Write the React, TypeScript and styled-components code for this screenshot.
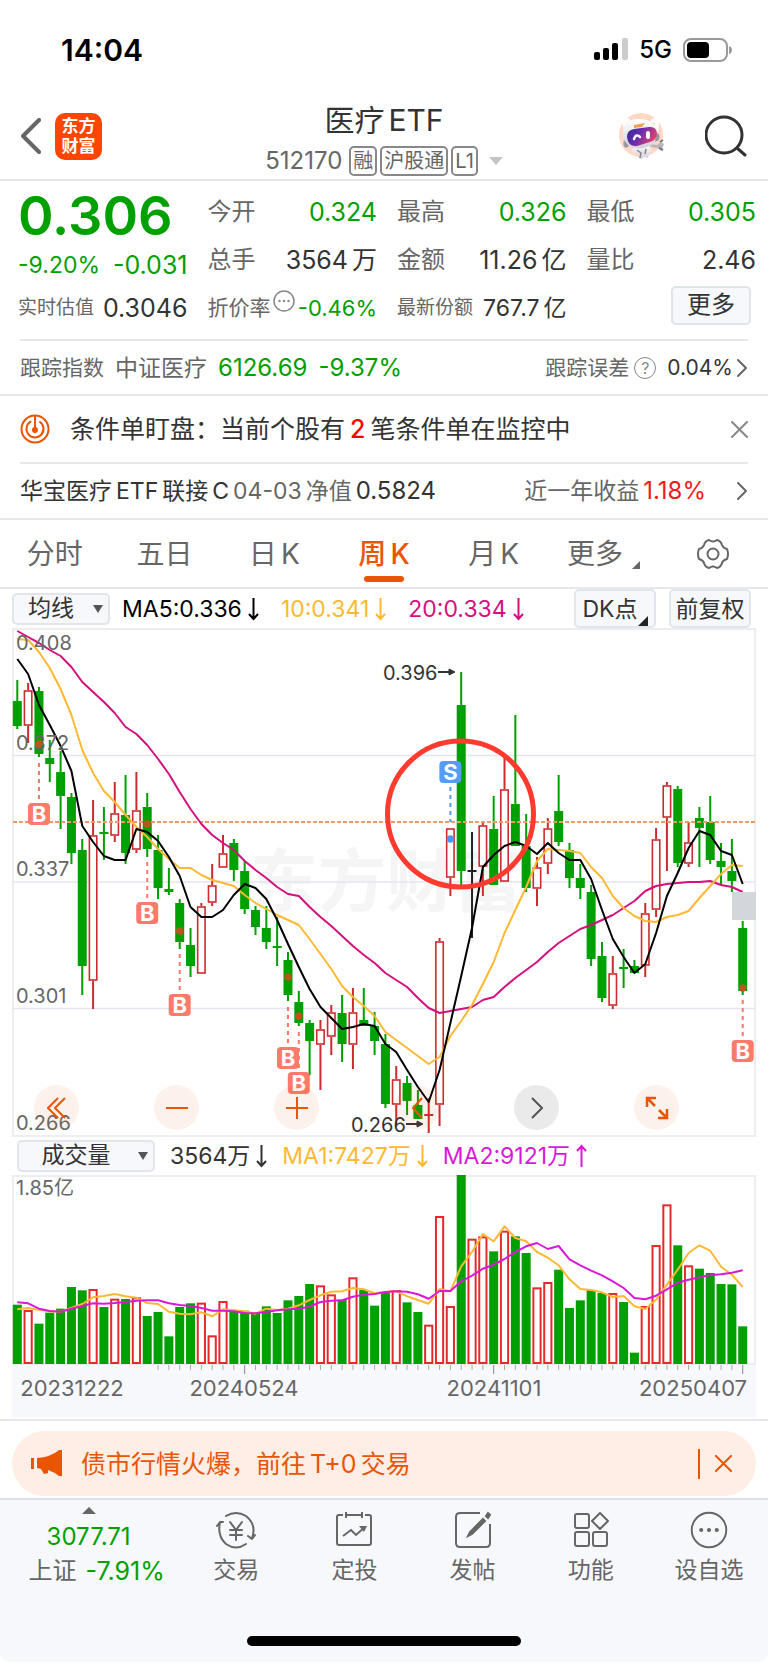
import React, { useState } from "react";
import styled, { createGlobalStyle, css } from "styled-components";

const GREEN = "#00a000";
const ORANGE = "#ea5504";
const GREY = "#666";
const INK = "#333";
const LINE = "#e6e8ec";
const PANEL = "#f7f8fb";
const YELLOW = "#fdb933";
const MAGENTA = "#d4107f";
const VIOLET = "#d81ad8";

const Global = createGlobalStyle`
  * { box-sizing: border-box; }
  body {
    margin: 0;
    background: #fff;
    color: ${INK};
    font-family: Inter, "Noto Sans CJK SC", sans-serif;
    font-size: 24px;
    line-height: 32px;
  }
  button, select {
    margin: 0;
    padding: 0;
    border: 0;
    background: none;
    color: inherit;
    font: inherit;
    cursor: pointer;
  }
  a { color: inherit; text-decoration: none; }
  svg { display: block; flex: none; }
`;

const Page = styled.div`
  display: flex;
  flex-direction: column;
  white-space: nowrap;
`;

/* ---------- status bar and header ---------- */

const StatusBar = styled.div`
  display: flex;
  align-items: center;
  justify-content: space-between;
  height: 99px;
  padding: 0 36px 0 61px;
  color: #000;
`;

const Clock = styled.time`
  font-size: 30px;
  font-weight: 600;
`;

const StatusIcons = styled.div`
  display: flex;
  align-items: center;
  gap: 11px;
  font-weight: 500;
`;

const Header = styled.header`
  display: grid;
  grid-template-columns: 1fr auto 1fr;
  align-items: center;
  height: 82px;
  padding: 0 21px;
  border-bottom: 2px solid ${LINE};
`;

const HeaderSide = styled.div<{ $end?: boolean }>`
  display: flex;
  align-items: center;
  gap: ${(p) => (p.$end ? 40 : 14)}px;
  justify-content: ${(p) => (p.$end ? "flex-end" : "flex-start")};
  padding-bottom: 6px;
`;

const Logo = styled.a`
  display: grid;
  place-content: center;
  width: 47px;
  height: 47px;
  border-radius: 10px;
  background: #ff4500;
  color: #fff;
  font-size: 17px;
  font-weight: 700;
  line-height: 20px;
`;

const Titles = styled.div`
  display: flex;
  flex-direction: column;
  align-items: center;
  gap: 6px;
`;

const Title = styled.h1`
  display: flex;
  gap: 4px;
  margin: 0;
  font-size: 30px;
  font-weight: 400;
  line-height: 38px;
`;

const SubTitle = styled.div`
  display: flex;
  align-items: center;
  gap: 3px;
  height: 32px;
  color: ${GREY};
`;

const Code = styled.span`
  margin-right: 4px;
`;

const Tag = styled.span`
  height: 30px;
  padding: 0 2px;
  border: 2px solid #888;
  border-radius: 5px;
  font-size: 20px;
  line-height: 26px;
`;

const SubToggle = styled.button`
  margin-left: 8px;
`;

/* ---------- quotes ---------- */

const Quotes = styled.section`
  display: grid;
  grid-template-columns: repeat(4, minmax(0, 1fr));
  grid-template-rows: repeat(3, 48px);
  column-gap: 20px;
  padding: 7px 12px 7px 18px;
`;

const Headline = styled.div`
  grid-row: span 2;
  color: ${GREEN};
`;

const Price = styled.div`
  font-size: 54px;
  font-weight: 600;
  line-height: 56px;
`;

const Change = styled.div`
  display: flex;
  justify-content: space-between;
  font-size: 25px;
  line-height: 42px;
`;

const Percent = styled.span`
  font-size: 23px;
`;

const Cell = styled.div`
  display: flex;
  align-items: center;
  justify-content: space-between;
`;

const Label = styled.span<{ $size?: number }>`
  display: flex;
  color: ${GREY};
  font-size: ${(p) => p.$size ?? 24}px;
`;

const Value = styled.span<{ $down?: boolean; $size?: number }>`
  display: flex;
  gap: 4px;
  color: ${(p) => (p.$down ? GREEN : INK)};
  font-size: ${(p) => p.$size ?? 25}px;
`;

const MoreButton = styled.button`
  width: 80px;
  height: 39px;
  margin: 0 5px 6px auto;
  border: 2px solid #dfe3ea;
  border-radius: 5px;
  background: ${PANEL};
`;

/* ---------- information rows ---------- */

const Row = styled.section<{ $height: number; $full?: boolean }>`
  display: flex;
  align-items: center;
  justify-content: space-between;
  height: ${(p) => p.$height}px;
  margin: 0 ${(p) => (p.$full ? 0 : 20)}px;
  padding: 0 ${(p) => (p.$full ? 20 : 0)}px;
  border-bottom: 2px solid ${LINE};
`;

const RowTop = styled.hr`
  width: calc(100% - 40px);
  height: 2px;
  margin: 0 20px;
  border: 0;
  background: ${LINE};
`;

const Group = styled.div<{ $gap?: number; $size?: number }>`
  display: flex;
  align-items: center;
  gap: ${(p) => p.$gap ?? 4}px;
  font-size: ${(p) => p.$size ?? 24}px;
`;

const Tone = styled.span<{ $c: string; $strong?: boolean; $size?: number }>`
  color: ${(p) => p.$c};
  font-size: ${(p) => (p.$size ? `${p.$size}px` : "inherit")};
  font-weight: ${(p) => (p.$strong ? 500 : 400)};
`;

/* ---------- period tabs ---------- */

const Tabs = styled.nav`
  display: grid;
  grid-template-columns: repeat(7, 1fr);
  height: 69px;
  border-bottom: 2px solid ${LINE};
`;

const Tab = styled.button<{ $on?: boolean }>`
  position: relative;
  display: flex;
  align-items: center;
  justify-content: center;
  gap: 4px;
  color: ${(p) => (p.$on ? ORANGE : GREY)};
  font-size: 28px;
  font-weight: ${(p) => (p.$on ? 500 : 400)};
  ${(p) =>
    p.$on &&
    css`
      &::after {
        content: "";
        position: absolute;
        bottom: 5px;
        left: calc(50% - 20px);
        width: 40px;
        height: 6px;
        border-radius: 3px;
        background: ${ORANGE};
      }
    `}
`;

const Corner = styled.i<{ $c: string }>`
  align-self: flex-end;
  border: 5px solid transparent;
  border-right-color: ${(p) => p.$c};
  border-bottom-color: ${(p) => p.$c};
`;

const TabCorner = styled(Corner)`
  margin: 0 0 18px 5px;
  border-width: 4px;
`;

/* ---------- indicator bars ---------- */

const IndicatorBar = styled.div<{ $inset: number; $height: number }>`
  display: flex;
  align-items: center;
  height: ${(p) => p.$height}px;
  padding: 0 17px 0 ${(p) => p.$inset}px;
`;

const Picker = styled.label<{ $width: number }>`
  position: relative;
  width: ${(p) => p.$width}px;
  height: 32px;
  border: 2px solid #e2e5eb;
  border-radius: 5px;
  background: ${PANEL};
  font-size: 23px;
  &::after {
    content: "";
    position: absolute;
    top: 10px;
    right: 5px;
    border: 5px solid transparent;
    border-top: 8px solid #555;
    border-bottom: 0;
    pointer-events: none;
  }
`;

const PickerSelect = styled.select`
  display: block;
  appearance: none;
  width: 100%;
  height: 26px;
  padding-right: 20px;
  line-height: 26px;
  text-align: center;
  text-align-last: center;
`;

const Readings = styled.div<{ $gap: number; $left: number }>`
  display: flex;
  flex: 1;
  gap: ${(p) => p.$gap}px;
  margin-left: ${(p) => p.$left}px;
  font-size: 23px;
`;

const Reading = styled.span<{ $c: string }>`
  display: flex;
  align-items: center;
  gap: 5px;
  color: ${(p) => p.$c};
`;

const ToolButton = styled.button`
  display: flex;
  align-items: center;
  justify-content: center;
  width: 82px;
  height: 39px;
  margin-left: 13px;
  border: 2px solid #e2e5eb;
  border-radius: 5px;
  background: ${PANEL};
  font-size: 23px;
`;

/* ---------- charts ---------- */

const ChartBox = styled.div`
  position: relative;
  margin: 0 12px;
`;

const Plot = styled.svg`
  width: 100%;
  height: auto;
  font-family: Inter, "Noto Sans CJK SC", sans-serif;
`;

const ChartTools = styled.div`
  position: absolute;
  right: 77px;
  bottom: 7px;
  left: 22px;
  display: flex;
  justify-content: space-between;
`;

const RoundButton = styled.button<{ $grey?: boolean }>`
  display: grid;
  place-items: center;
  width: 45px;
  height: 45px;
  border-radius: 50%;
  background: ${(p) => (p.$grey ? "rgba(80,80,80,.12)" : "rgba(234,85,4,.08)")};
  color: ${(p) => (p.$grey ? "#555" : ORANGE)};
`;

/* ---------- bottom ---------- */

const BannerArea = styled.div`
  margin-top: 1px;
  padding: 10px 12px 2px;
  border-top: 2px solid ${LINE};
`;

const Banner = styled.div`
  display: flex;
  align-items: center;
  height: 65px;
  padding: 0 24px 0 19px;
  border-radius: 33px;
  background: #feeee6;
  color: ${ORANGE};
  font-size: 25px;
`;

const BannerLink = styled.a`
  display: flex;
  flex: 1;
  gap: 4px;
  margin-left: 18px;
`;

const BannerClose = styled.button`
  display: flex;
  align-items: center;
  height: 30px;
  padding-left: 15px;
  border-left: 2px solid ${ORANGE};
`;

const BottomBar = styled.footer`
  display: flex;
  flex-direction: column;
  align-items: center;
  justify-content: space-between;
  height: 164px;
  padding-bottom: 16px;
  border-top: 2px solid #dcdfe6;
  border-radius: 0 0 10px 10px;
  background: ${PANEL};
`;

const BottomNav = styled.nav`
  display: grid;
  grid-template-columns: 3fr repeat(5, 2fr);
  width: 100%;
`;

const NavItem = styled.button`
  display: flex;
  flex-direction: column;
  align-items: center;
  gap: 5px;
  padding-top: 11px;
  color: ${GREY};
  font-size: 23px;
`;

const IndexButton = styled.button`
  display: flex;
  flex-direction: column;
  align-items: center;
  padding-top: 7px;
  color: ${GREEN};
  line-height: 34px;
`;

const IndexFigures = styled.span`
  display: flex;
  flex-direction: column;
  align-items: center;
  width: 100%;
  padding-top: 5px;
`;

const IndexChange = styled(Group)`
  padding-left: 16px;
`;

const HomeIndicator = styled.div`
  width: 274px;
  height: 10px;
  border-radius: 5px;
  background: #000;
`;

/* ---------- data ---------- */

// kind, high, body top, body bottom, low
type Candle = [string, number, number, number, number];

const candles: Candle[] = [
  ["g", 680, 701, 726, 729], ["r", 683, 690, 726, 743], ["g", 687, 691, 754, 757], ["g", 740, 758, 764, 782],
  ["g", 751, 772, 796, 829], ["g", 793, 797, 853, 864], ["g", 839, 850, 966, 995], ["r", 800, 835, 981, 1009],
  ["g", 807, 832, 834, 860], ["r", 782, 813, 836, 842], ["g", 775, 815, 853, 864], ["r", 772, 810, 850, 853],
  ["g", 793, 807, 849, 857], ["g", 835, 850, 888, 899], ["g", 868, 889, 892, 895], ["g", 899, 903, 942, 949],
  ["g", 928, 945, 966, 977], ["r", 903, 906, 974, 974], ["r", 864, 885, 903, 906], ["r", 835, 853, 868, 868],
  ["g", 839, 843, 870, 881], ["g", 861, 871, 909, 914], ["g", 906, 910, 927, 935], ["g", 906, 928, 942, 949],
  ["g", 917, 946, 948, 966], ["g", 952, 960, 995, 1001], ["g", 991, 1002, 1023, 1026], ["g", 1020, 1023, 1041, 1075],
  ["r", 1020, 1029, 1045, 1090], ["r", 1005, 1012, 1037, 1055], ["g", 995, 1013, 1044, 1062], ["r", 988, 1012, 1045, 1069],
  ["g", 988, 1020, 1026, 1026], ["g", 1012, 1026, 1041, 1055], ["g", 1034, 1044, 1104, 1108], ["r", 1066, 1079, 1105, 1126],
  ["g", 1076, 1083, 1101, 1115], ["g", 1090, 1105, 1119, 1119], ["r", 1098, 1114, 1116, 1133], ["r", 938, 941, 1105, 1126],
  ["r", 828, 828, 878, 896], ["g", 672, 705, 871, 885], ["k", 832, 870, 872, 938], ["r", 822, 825, 867, 896],
  ["g", 796, 829, 885, 885], ["r", 755, 789, 882, 882], ["g", 715, 804, 846, 846], ["g", 814, 846, 888, 892],
  ["r", 857, 867, 889, 906], ["r", 818, 828, 864, 874], ["g", 775, 811, 842, 846], ["g", 843, 850, 878, 888],
  ["g", 864, 878, 888, 899], ["g", 885, 892, 959, 966], ["g", 942, 956, 998, 1002], ["r", 956, 973, 1006, 1009],
  ["g", 949, 967, 969, 988], ["g", 960, 966, 973, 973], ["r", 903, 913, 966, 977], ["r", 828, 839, 910, 917],
  ["r", 782, 785, 818, 871], ["g", 786, 789, 863, 867], ["r", 822, 842, 864, 867], ["g", 807, 818, 828, 867],
  ["g", 796, 822, 860, 864], ["g", 843, 861, 867, 885], ["g", 839, 871, 881, 892], ["g", 921, 928, 991, 995],
];

const ma5 = [
  659, 674, 705, 725, 746, 771, 826, 842, 856, 860, 860, 829, 832, 841, 857, 876, 907, 917, 917, 910, 895, 884, 888, 899,
  920, 944, 967, 989, 1007, 1018, 1029, 1027, 1024, 1026, 1044, 1052, 1070, 1087, 1102, 1070, 1023, 976, 928, 867, 855,
  846, 842, 846, 854, 843, 853, 860, 860, 879, 910, 939, 957, 973, 964, 933, 896, 873, 848, 831, 835, 851, 855, 884,
];

const ma10 = [
  639, 640, 652, 668, 689, 715, 750, 773, 791, 802, 815, 827, 837, 849, 859, 868, 868, 875, 880, 883, 886, 895, 903, 909,
  915, 920, 925, 939, 954, 969, 986, 997, 1006, 1016, 1032, 1040, 1048, 1056, 1064, 1057, 1036, 1021, 1005, 984, 962, 933,
  910, 887, 861, 849, 850, 851, 853, 867, 878, 896, 908, 916, 921, 922, 917, 915, 911, 898, 886, 874, 865, 866,
];

const ma20 = [
  631, 637, 643, 650, 656, 667, 682, 692, 702, 713, 727, 734, 745, 759, 774, 792, 809, 824, 835, 843, 850, 861, 870, 878,
  887, 894, 896, 907, 917, 926, 936, 946, 955, 963, 973, 980, 987, 998, 1008, 1013, 1011, 1009, 1007, 1000, 997, 987, 978,
  970, 962, 952, 943, 936, 929, 925, 920, 915, 908, 901, 891, 886, 884, 883, 882, 882, 881, 885, 887, 892,
];

// Bar heights, three units to a pixel.
const volumes = [
  178, 162, 121, 154, 166, 231, 221, 225, 171, 196, 195, 200, 144, 156, 83, 171, 182, 184, 86, 189, 157, 160, 153, 173,
  153, 191, 204, 240, 236, 209, 193, 260, 222, 175, 216, 222, 185, 156, 118, 444, 174, 568, 376, 383, 338, 400, 383, 333,
  230, 246, 283, 168, 191, 222, 213, 213, 186, 34, 174, 357, 479, 356, 296, 286, 273, 240, 239, 113,
];

const volMa1 = [
  164, 168, 163, 158, 157, 168, 180, 200, 204, 210, 203, 199, 183, 180, 157, 151, 149, 155, 143, 164, 161, 158, 151, 166,
  162, 166, 176, 192, 206, 217, 218, 228, 224, 212, 216, 219, 203, 192, 181, 225, 218, 293, 336, 390, 368, 413, 378, 368,
  336, 319, 296, 254, 225, 222, 215, 201, 204, 173, 165, 193, 238, 283, 333, 356, 340, 292, 268, 231,
];

const volMa2 = [
  185, 182, 166, 159, 157, 166, 174, 182, 181, 183, 186, 190, 191, 191, 182, 177, 174, 168, 160, 160, 158, 153, 152, 156,
  161, 164, 166, 172, 186, 190, 191, 202, 208, 210, 216, 218, 217, 209, 196, 219, 219, 248, 265, 286, 298, 315, 336, 353,
  363, 345, 354, 314, 296, 280, 266, 248, 228, 198, 194, 205, 224, 244, 253, 260, 266, 269, 274, 281,
];

const levels: [string, number][] = [
  ["0.408", 650], ["0.372", 750], ["0.337", 876], ["0.301", 1003], ["0.266", 1130],
];

// candle index, dot height, badge height
const buys: [number, number, number][] = [
  [2, 744, 814], [12, 824, 913], [15, 931, 1005], [25, 977, 1058], [26, 1016, 1083], [67, 988, 1051],
];

const dates: [string, number][] = [
  ["20231222", 72], ["20240524", 244], ["20241101", 494], ["20250407", 693],
];

const cx = (i: number) => 17.3 + i * 10.827;
const trace = (ys: number[], f: (v: number) => number = (v) => v) =>
  ys.map((v, i) => `${cx(i).toFixed(1)},${f(v).toFixed(1)}`).join(" ");

/* ---------- small drawings ---------- */

const Chevron = ({ w, h, c = GREY, s = 2, left }: { w: number; h: number; c?: string; s?: number; left?: boolean }) => (
  <svg width={w} height={h} fill="none" stroke={c} strokeWidth={s} strokeLinejoin="round" strokeLinecap="round">
    <path d={left ? `M${w - 2} 2L2 ${h / 2}L${w - 2} ${h - 2}` : `M2 2L${w - 2} ${h / 2}L2 ${h - 2}`} />
  </svg>
);

const Cross = ({ c }: { c: string }) => (
  <svg width="17" height="17" stroke={c} strokeWidth="2" strokeLinecap="round">
    <path d="M1 1L16 16M16 1L1 16" />
  </svg>
);

const Arrow = ({ up }: { up?: boolean }) => (
  <svg width="13" height="24" fill="none" stroke="currentColor" strokeWidth="2">
    <path d={up ? "M6.500 23V2M2 7L6.500 2L11 7" : "M6.500 1V22M2 17L6.500 22L11 17"} />
  </svg>
);

const Signal = () => (
  <svg width="34" height="23">
    <rect x="0" y="14" width="6" height="8" rx="2" />
    <rect x="9" y="10" width="6" height="12" rx="2" />
    <rect x="18" y="5" width="6" height="17" rx="2" />
    <rect x="28" y="0" width="6" height="22" rx="2" fill="#ccc" />
  </svg>
);

const Battery = () => (
  <svg width="49" height="24">
    <rect x="1" y="1" width="43" height="22" rx="7" fill="none" stroke="#999" strokeWidth="2" />
    <rect x="4" y="4" width="22" height="16" rx="4" />
    <path d="M46 8q3 1 3 4t-3 4z" fill="#999" />
  </svg>
);

const Robot = () => (
  <svg width="46" height="46" viewBox="0 0 46 46">
    <defs>
      <linearGradient id="visor" x1="0" x2="1" y1="0" y2=".4">
        <stop offset="0" stopColor="#2c2f92" />
        <stop offset=".5" stopColor="#6a2bb0" />
        <stop offset="1" stopColor="#e0436c" />
      </linearGradient>
      <linearGradient id="shell" x1="0" x2="0" y1="0" y2="1">
        <stop offset="0" stopColor="#fff" />
        <stop offset="1" stopColor="#d5d1d9" />
      </linearGradient>
    </defs>
    <circle cx="22" cy="22" r="22" fill="#ffd9c6" />
    <path d="M14 32l15-2 3 6-3 9-4-1-2 2-3-1-1-4-6-2z" fill="url(#shell)" />
    <path d="M18 37l4 3-1 5M27 36l-1 5" stroke="#8a8690" strokeWidth="1.500" fill="none" />
    <path d="M32 31l6 1 4-3 3 2-2 5-5-1-7-1z" fill="#b9b5bd" />
    <path d="M41 29l3-2M40 35l4 2" stroke="#777" strokeWidth="2" />
    <path d="M6 14Q4 4 10 8M33 9q4-5 5 2l-1 9" stroke="#fff" strokeWidth="4" fill="none" />
    <path d="M4 25Q2 7 18 6q18-1 21 14 1 12-15 15Q6 37 4 25z" fill="url(#shell)" />
    <path d="M5 27q-2 6 2 8l3-2zM37 20q5 0 3 7l-4 2z" fill="#9b98a4" />
    <path d="M15 12l11-2-3 4-8 1z" fill="#f3a14c" />
    <path d="M8 24q0-7 7-8l15-2q7-1 8 6 0 7-7 9l-13 4Q9 34 8 24z" fill="url(#visor)" />
    <path d="M15 26q2-6 6-2" stroke="#fff" strokeWidth="2.500" fill="none" strokeLinecap="round" />
    <rect x="27" y="18" width="4" height="8" rx="2" fill="#fff" />
  </svg>
);

const Search = () => (
  <svg width="42" height="42" fill="none" stroke={INK} strokeWidth="3" strokeLinecap="round">
    <circle cx="19" cy="20" r="18" />
    <path d="M32 33l8 7" />
  </svg>
);

const Radar = () => (
  <svg width="30" height="30" fill="none" stroke={ORANGE} strokeWidth="2" strokeLinecap="round">
    <circle cx="15" cy="15" r="13.500" />
    <path d="M10.500 7.700A8.500 8.500 0 1 0 20 8M15 2V15M22 19q1-1 1-3" />
    <circle cx="15" cy="16" r="2" fill={ORANGE} />
  </svg>
);

const Dots = ({ size, c, s = 1.5 }: { size: number; c: string; s?: number }) => (
  <svg width={size} height={size} viewBox="0 0 22 22">
    <circle cx="11" cy="11" r="10" fill="none" stroke={c} strokeWidth={s} />
    {[6.5, 11, 15.5].map((x) => (
      <circle key={x} cx={x} cy="11" r="1.200" fill={c} />
    ))}
  </svg>
);

const Help = styled.button`
  width: 22px;
  height: 22px;
  margin: 0 8px 0 2px;
  border: 1px solid #888;
  border-radius: 50%;
  color: #888;
  font-size: 16px;
  line-height: 20px;
`;

const NoteButton = styled.button`
  position: relative;
  top: -7px;
  margin-left: 2px;
`;

const Gear = () => (
  <svg width="32" height="32" viewBox="0 0 32 32" fill="none" stroke={GREY} strokeWidth="2" strokeLinejoin="round">
    <path d="M12 2Q16 5 20 2Q24 3 25 7Q26 10 30 11Q32 16 30 21Q26 22 25 25Q24 29 20 30Q16 27 12 30Q8 29 7 25Q6 22 2 21Q0 16 2 11Q6 10 7 7Q8 3 12 2Z" />
    <circle cx="16" cy="16" r="5.500" />
  </svg>
);

const Megaphone = () => (
  <svg width="32" height="27" fill={ORANGE}>
    <path d="M0 8h3v11H0zM6 8Q20 7 28 0h3v26h-3q-5-4-11-6v3l-4 1-3-5-4-1z" />
  </svg>
);

const navIcon = { width: 40, height: 38, fill: "none", stroke: GREY, strokeWidth: 2 } as const;

const TradeIcon = () => (
  <svg {...navIcon} viewBox="0 0 40 38" strokeLinecap="round" strokeLinejoin="round">
    <path d="M10 5Q20-1 30 5Q41 14 36 27M39 24l-3 4-4-3M30 33Q20 40 10 33Q1 25 4 11M1 15l3-4 3 0" />
    <path d="M14 11l6 8 6-8M14 19h12M14 24h12M20 19v10" />
  </svg>
);

const PlanIcon = () => (
  <svg {...navIcon} viewBox="0 0 40 38">
    <path d="M9 4H5Q3 4 3 6V32Q3 34 5 34H35Q37 34 37 32V6Q37 4 35 4H31M12 1V7M28 1V7M12 4H28" />
    <path d="M9 25l8-6 5 5 9-8" />
    <path d="M25 15h8l-3 6z" fill={GREY} stroke="none" />
  </svg>
);

const PostIcon = () => (
  <svg {...navIcon} viewBox="0 0 40 38">
    <path d="M27 2H7Q3 2 3 6V32Q3 36 7 36H33Q37 36 37 32V13" />
    <path d="M30 8l2 2L19 23l-4 2 2-4z" fill={GREY} />
    <path d="M33 5l2-3 2 2-2 3z" fill={GREY} />
  </svg>
);

const AppsIcon = () => (
  <svg {...navIcon} viewBox="0 0 40 38">
    <rect x="4" y="3" width="14" height="14" rx="2" />
    <rect x="4" y="21" width="14" height="14" rx="2" />
    <rect x="22" y="21" width="14" height="14" rx="2" />
    <path d="M29 2l8 8-8 8-8-8z" strokeLinejoin="round" />
  </svg>
);

const Triangle = ({ up, w, c }: { up?: boolean; w: number; c: string }) => (
  <svg width={w} height="8" fill={c}>
    <path d={up ? `M0 7H${w}L${w / 2} 0z` : `M0 0H${w}L${w / 2} 8z`} />
  </svg>
);

/* ---------- charts ---------- */

const tint: Record<string, string> = { g: GREEN, r: "#cc2b30", k: "#222" };

const Badge = ({ x, y, text, c }: { x: number; y: number; text: string; c: string }) => (
  <g>
    <rect x={x - 11} y={y - 11} width="22" height="22" rx="4" fill={c} />
    <text x={x} y={y + 8} fontSize="22" fontWeight="700" fill="#fff" textAnchor="middle">
      {text}
    </text>
  </g>
);

const PriceChart = () => (
  <Plot viewBox="12 628 744 509" role="img" aria-label="周K">
    <rect x="13" y="629" width="742" height="507" fill="#fff" stroke={LINE} strokeWidth="1.500" />
    <text x="386" y="906" fontSize="68" fontWeight="700" fill="#f5f5f5" textAnchor="middle">
      东方财富
    </text>
    {[755.5, 882, 1008.5].map((y) => (
      <line key={y} x1="13" x2="755" y1={y} y2={y} stroke="#e4e5ee" strokeWidth="1.500" />
    ))}
    {candles.map(([k, hi, top, bottom, lo], i) => {
      const hollow = k === "r" && bottom - top > 3;
      return (
        <g key={i} stroke={tint[k]} strokeWidth="2">
          <path d={`M${cx(i)} ${hi}V${top}M${cx(i)} ${bottom}V${lo}`} />
          {hollow ? (
            <rect x={cx(i) - 3.7} y={top + 1} width="7.400" height={bottom - top - 2} fill="#fff" strokeWidth="1.600" />
          ) : (
            <rect x={cx(i) - 4.5} y={top} width="9" height={bottom - top} fill={tint[k]} stroke="none" />
          )}
        </g>
      );
    })}
    <line x1="13" x2="755" y1="822" y2="822" stroke="#ee9a68" strokeWidth="2" strokeDasharray="4 2" />
    <g fill="none" strokeWidth="2" strokeLinejoin="round">
      <polyline points={trace(ma20)} stroke={MAGENTA} />
      <polyline points={trace(ma10)} stroke={YELLOW} />
      <polyline points={trace(ma5)} stroke="#000" />
    </g>
    <g fontSize="20" fill={GREY}>
      {levels.map(([t, y]) => (
        <text key={t} x="16" y={y}>
          {t}
        </text>
      ))}
    </g>
    {buys.map(([i, dot, badge]) => (
      <g key={i}>
        <circle cx={cx(i)} cy={dot} r="3.700" fill="#b8561c" />
        <line x1={cx(i)} x2={cx(i)} y1={badge - 51} y2={badge - 13} stroke="#fa7767" strokeWidth="2" strokeDasharray="4 4" />
        <Badge x={cx(i)} y={badge} text="B" c="#fe7a6b" />
      </g>
    ))}
    <line x1={cx(40)} x2={cx(40)} y1="787" y2="822" stroke="#4d97f5" strokeWidth="2" strokeDasharray="4 4" />
    <circle cx={cx(40)} cy="839" r="3.700" fill="#4d97f5" />
    <Badge x={cx(40)} y={772} text="S" c="#559bfa" />
    <circle cx="460.500" cy="814" r="73" fill="none" stroke="#ff3b30" strokeWidth="5" />
    <g fontSize="20" fill={INK} stroke="none">
      <text x="383" y="680">0.396</text>
      <text x="351" y="1132">0.266</text>
    </g>
    <g stroke={INK} strokeWidth="2" fill={INK}>
      <path d="M438 672H450M406 1124H418" />
      <path d="M449 669l6 3-6 3zM417 1121l6 3-6 3z" strokeWidth="1" />
    </g>
    <rect x="732" y="892" width="24" height="28" fill="#d3d7dc" />
  </Plot>
);

const BASE = 1364;

const VolumeChart = () => (
  <Plot viewBox="12 1175 744 243" role="img" aria-label="成交量">
    <rect x="12" y={BASE} width="744" height="54" fill={PANEL} />
    <rect x="13" y="1176" width="742" height="188" fill="#fff" stroke={LINE} strokeWidth="1.500" />
    <text x="16" y="1195" fontSize="20" fill={GREY}>
      1.85亿
    </text>
    {volumes.map((v, i) => {
      const red = candles[i][0] !== "g";
      const h = v / 3;
      return red ? (
        <rect key={i} x={cx(i) - 3.6} y={BASE - h + 1} width="7.200" height={h - 2} fill="#fff" stroke="#e8292c" strokeWidth="2" />
      ) : (
        <rect key={i} x={cx(i) - 4.5} y={BASE - h} width="9" height={h} fill={GREEN} />
      );
    })}
    <g fill="none" strokeWidth="2" strokeLinejoin="round">
      <polyline points={trace(volMa1, (v) => BASE - v / 3)} stroke={YELLOW} />
      <polyline points={trace(volMa2, (v) => BASE - v / 3)} stroke={VIOLET} />
    </g>
    {candles.map((_, i) => {
      const major = i === 21 || i === 44 || i === 67;
      return i < 13 ? null : (
        <line key={i} x1={cx(i)} x2={cx(i)} y1={BASE + 1} y2={BASE + (major ? 10 : 6)} stroke={major ? "#888" : "#aaa"} />
      );
    })}
    <g fontSize="22" fill={GREY} textAnchor="middle">
      {dates.map(([t, x]) => (
        <text key={t} x={x} y="1396">
          {t}
        </text>
      ))}
    </g>
  </Plot>
);

/* ---------- page ---------- */

const periods: string[][] = [["分时"], ["五日"], ["日", "K"], ["周", "K"], ["月", "K"], ["更多"]];

const parts = (list: string[]) => list.map((t) => <span key={t}>{t}</span>);

export default function App() {
  const [period, setPeriod] = useState(3);

  return (
    <Page>
      <Global />
      <StatusBar>
        <Clock>14:04</Clock>
        <StatusIcons>
          <Signal />
          5G
          <Battery />
        </StatusIcons>
      </StatusBar>

      <Header>
        <HeaderSide>
          <button aria-label="返回">
            <Chevron w={20} h={36} s={4} left />
          </button>
          <Logo href="#home">
            <span>东方</span>
            <span>财富</span>
          </Logo>
        </HeaderSide>
        <Titles>
          <Title>{parts(["医疗", "ETF"])}</Title>
          <SubTitle>
            <Code>512170</Code>
            <Tag>融</Tag>
            <Tag>沪股通</Tag>
            <Tag>L1</Tag>
            <SubToggle aria-label="展开">
              <Triangle w={14} c="#c4c4c4" />
            </SubToggle>
          </SubTitle>
        </Titles>
        <HeaderSide $end>
          <button aria-label="助手">
            <Robot />
          </button>
          <button aria-label="搜索">
            <Search />
          </button>
        </HeaderSide>
      </Header>

      <Quotes>
        <Headline>
          <Price>0.306</Price>
          <Change>
            <Percent>-9.20%</Percent>
            <span>-0.031</span>
          </Change>
        </Headline>
        <Cell><Label>今开</Label><Value $down>0.324</Value></Cell>
        <Cell><Label>最高</Label><Value $down>0.326</Value></Cell>
        <Cell><Label>最低</Label><Value $down>0.305</Value></Cell>
        <Cell><Label>总手</Label><Value>{parts(["3564", "万"])}</Value></Cell>
        <Cell><Label>金额</Label><Value>{parts(["11.26", "亿"])}</Value></Cell>
        <Cell><Label>量比</Label><Value>2.46</Value></Cell>
        <Cell><Label $size={19}>实时估值</Label><Value>0.3046</Value></Cell>
        <Cell>
          <Label $size={21}>
            折价率
            <NoteButton aria-label="说明"><Dots size={22} c="#888" /></NoteButton>
          </Label>
          <Value $down $size={22}>-0.46%</Value>
        </Cell>
        <Cell><Label $size={19}>最新份额</Label><Value $size={23}>{parts(["767.7", "亿"])}</Value></Cell>
        <Cell><MoreButton>更多</MoreButton></Cell>
      </Quotes>

      <RowTop />
      <Row $height={55} $full>
        <Group $gap={11}>
          <Tone $c={GREY} $size={21}>跟踪指数</Tone>
          <Tone $c={GREY} $size={23}>中证医疗</Tone>
          <Tone $c={GREEN}>6126.69</Tone>
          <Tone $c={GREEN}>-9.37%</Tone>
        </Group>
        <Group $gap={3} $size={21}>
          <Tone $c={GREY}>跟踪误差</Tone>
          <Help aria-label="帮助">?</Help>
          <span>0.04%</span>
          <Chevron w={12} h={20} />
        </Group>
      </Row>
      <Row $height={68}>
        <Group $gap={20}>
          <Radar />
          <Group $size={25} $gap={5}>
            <span>条件单盯盘：当前个股有</span>
            <Tone $c="#f00" $strong>2</Tone>
            <span>笔条件单在监控中</span>
          </Group>
        </Group>
        <button aria-label="关闭"><Cross c="#888" /></button>
      </Row>
      <Row $height={56} $full>
        <Group $size={23}>
          {parts(["华宝医疗", "ETF", "联接", "C"])}
          <Tone $c={GREY}>04-03</Tone>
          <Tone $c={GREY}>净值</Tone>
          <Tone $c={INK} $size={24}>0.5824</Tone>
        </Group>
        <Group $gap={30}>
          <Group>
            <Tone $c={GREY} $size={23}>近一年收益</Tone>
            <Tone $c="#f01a1a">1.18%</Tone>
          </Group>
          <Chevron w={12} h={20} />
        </Group>
      </Row>

      <Tabs>
        {periods.map((p, i) => (
          <Tab key={i} $on={i === period} onClick={() => setPeriod(i)}>
            {parts(p)}
            {i === 5 && <TabCorner $c={GREY} />}
          </Tab>
        ))}
        <Tab aria-label="设置"><Gear /></Tab>
      </Tabs>

      <IndicatorBar $inset={12} $height={39}>
        <Picker $width={98}>
          <PickerSelect aria-label="指标"><option>均线</option></PickerSelect>
        </Picker>
        <Readings $gap={21} $left={12}>
          <Reading $c="#000">MA5:0.336<Arrow /></Reading>
          <Reading $c={YELLOW}>10:0.341<Arrow /></Reading>
          <Reading $c={MAGENTA}>20:0.334<Arrow /></Reading>
        </Readings>
        <ToolButton>{parts(["DK", "点"])}<Corner $c="#222" /></ToolButton>
        <ToolButton>前复权</ToolButton>
      </IndicatorBar>

      <ChartBox>
        <PriceChart />
        <ChartTools>
          <RoundButton aria-label="最早">
            <svg width="20" height="24" fill="none" stroke="currentColor" strokeWidth="2"><path d="M11 2L1 12l10 10M18 2L8 12l10 10" /></svg>
          </RoundButton>
          <RoundButton aria-label="缩小">
            <svg width="24" height="24" stroke="currentColor" strokeWidth="2"><path d="M1 12H23" /></svg>
          </RoundButton>
          <RoundButton aria-label="放大">
            <svg width="24" height="24" stroke="currentColor" strokeWidth="2"><path d="M1 12H23M12 1V23" /></svg>
          </RoundButton>
          <RoundButton aria-label="向左">
            <svg width="12" height="24" fill="none" stroke="currentColor" strokeWidth="2"><path d="M11 2L2 12l9 10" /></svg>
          </RoundButton>
          <RoundButton $grey aria-label="向右">
            <svg width="12" height="24" fill="none" stroke="currentColor" strokeWidth="2"><path d="M1 2L11 12L1 22" /></svg>
          </RoundButton>
          <RoundButton aria-label="全屏">
            <svg width="24" height="24" fill="none" stroke="currentColor" strokeWidth="2.500"><path d="M2 11V2H11M2 2L10 10M22 13V22H13M22 22L14 14" /></svg>
          </RoundButton>
        </ChartTools>
      </ChartBox>

      <IndicatorBar $inset={17} $height={38}>
        <Picker $width={138}>
          <PickerSelect aria-label="副图"><option>成交量</option></PickerSelect>
        </Picker>
        <Readings $gap={14} $left={15}>
          <Reading $c={INK}>3564万<Arrow /></Reading>
          <Reading $c={YELLOW}>MA1:7427万<Arrow /></Reading>
          <Reading $c={VIOLET}>MA2:9121万<Arrow up /></Reading>
        </Readings>
      </IndicatorBar>

      <ChartBox>
        <VolumeChart />
      </ChartBox>

      <BannerArea>
        <Banner>
          <Megaphone />
          <BannerLink href="#trade">{parts(["债市行情火爆，前往", "T+0", "交易"])}</BannerLink>
          <BannerClose aria-label="关闭"><Cross c={ORANGE} /></BannerClose>
        </Banner>
      </BannerArea>

      <BottomBar>
        <BottomNav>
          <IndexButton>
            <Triangle up w={14} c={GREY} />
            <IndexFigures>
              <span>3077.71</span>
              <IndexChange $gap={9} $size={25}>
                <Tone $c={GREY} $size={24}>上证</Tone>
                <Tone $c={GREEN}>-7.91%</Tone>
              </IndexChange>
            </IndexFigures>
          </IndexButton>
          <NavItem><TradeIcon />交易</NavItem>
          <NavItem><PlanIcon />定投</NavItem>
          <NavItem><PostIcon />发帖</NavItem>
          <NavItem><AppsIcon />功能</NavItem>
          <NavItem><Dots size={38} c={GREY} s={1.1} />设自选</NavItem>
        </BottomNav>
        <HomeIndicator />
      </BottomBar>
    </Page>
  );
}
